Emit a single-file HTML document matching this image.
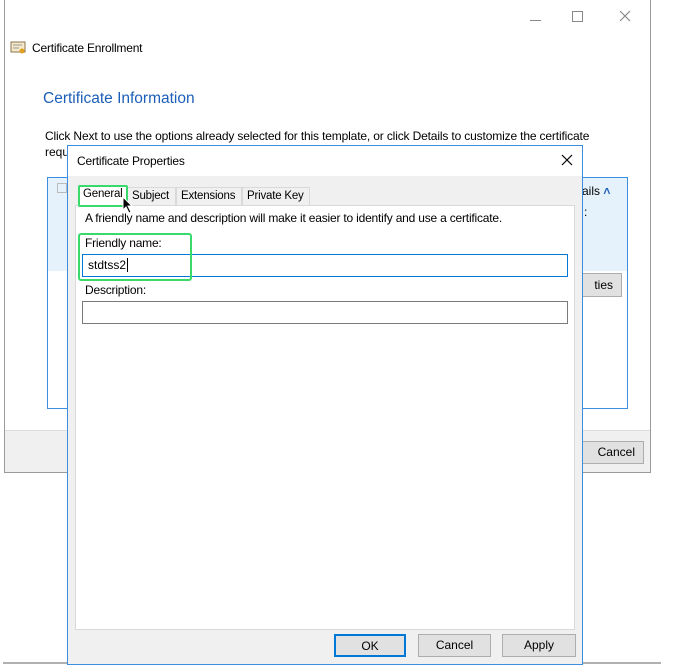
<!DOCTYPE html>
<html><head><style>
*{margin:0;padding:0;box-sizing:border-box}
body{width:673px;height:664px;background:#fff;font-family:"Liberation Sans",sans-serif;font-size:12px;color:#000;position:relative;overflow:hidden}
.a{position:absolute;white-space:nowrap}
.btn{position:absolute;background:#e1e1e1;border:1px solid #adadad;text-align:center;line-height:20px;font-size:12px}
.tab{font-size:11.5px;letter-spacing:-0.2px}
</style></head><body>
<div class="a" style="left:4px;top:0;width:647px;height:473px;border:1px solid #9a9a9a;border-top:none;background:#fff"></div>
<div class="a" style="left:5px;top:430px;width:645px;height:42px;background:#f0f0f0;border-top:1px solid #dcdcdc"></div>
<div class="a" style="left:3px;top:662px;width:658px;height:2px;background:#b0b0b0"></div>
<div class="a" style="left:530px;top:20px;width:11px;height:1px;background:#888"></div>
<div class="a" style="left:572px;top:11px;width:11px;height:11px;border:1px solid #888"></div>
<svg class="a" style="left:619px;top:10px" width="12" height="12"><path d="M1 1L11 11M11 1L1 11" stroke="#888" stroke-width="1.2"/></svg>
<svg class="a" style="left:10px;top:41px" width="16" height="14"><rect x="1" y="1" width="14" height="10" fill="#f6e9c9" stroke="#8a7450"/><line x1="3" y1="4" x2="12" y2="4" stroke="#999"/><line x1="3" y1="7" x2="9" y2="7" stroke="#999"/><circle cx="12" cy="10" r="2.5" fill="#e0a020"/></svg>
<div class="a" style="left:32px;top:41px;font-size:12px;letter-spacing:-0.2px">Certificate Enrollment</div>
<div class="a" style="left:43px;top:90px;font-size:15.5px;color:#1c5fb8">Certificate Information</div>
<div class="a" style="left:45px;top:129px;font-size:12px;letter-spacing:-0.15px">Click Next to use the options already selected for this template, or click Details to customize the certificate</div>
<div class="a" style="left:45px;top:145px;font-size:12px">requ</div>
<div class="a" style="left:47px;top:177px;width:581px;height:232px;border:1px solid #3b8de0;background:#fff"></div>
<div class="a" style="left:48px;top:178px;width:579px;height:93px;background:#e5f1fb"></div>
<div class="a" style="left:57px;top:183px;width:10px;height:10px;border:1px solid #bbb"></div>
<div class="a" style="left:582px;top:184px;font-size:12px">ails <span style="color:#1c5fb8;font-weight:bold">˄</span></div>
<div class="a" style="left:584px;top:205px;font-size:12px">:</div>
<div class="btn" style="left:570px;top:273px;width:52px;height:24px;line-height:22px;text-align:right;padding-right:8px">ties</div>
<div class="btn" style="left:570px;top:441px;width:74px;height:23px;line-height:21px;text-align:right;padding-right:8px">Cancel</div>
<div class="a" style="left:67px;top:145px;width:516px;height:520px;border:1px solid #3b8de0;background:#f0f0f0"></div>
<div class="a" style="left:68px;top:146px;width:514px;height:30px;background:#fff"></div>
<div class="a" style="left:77px;top:154px;font-size:12px;letter-spacing:-0.2px">Certificate Properties</div>
<svg class="a" style="left:561px;top:154px" width="12" height="12"><path d="M1 1L11 11M11 1L1 11" stroke="#000" stroke-width="1.2"/></svg>
<div class="a" style="left:75px;top:205px;width:500px;height:425px;background:#fff;border:1px solid #d9d9d9"></div>
<div class="a tab" style="left:127px;top:187px;width:49px;height:19px;border:1px solid #d9d9d9;border-bottom:none;padding:2px 0 0 4px">Subject</div>
<div class="a tab" style="left:176px;top:187px;width:66px;height:19px;border:1px solid #d9d9d9;border-bottom:none;padding:2px 0 0 4px">Extensions</div>
<div class="a tab" style="left:242px;top:187px;width:68px;height:19px;border:1px solid #d9d9d9;border-bottom:none;padding:2px 0 0 4px">Private Key</div>
<div class="a tab" style="left:78px;top:185px;width:50px;height:22px;background:#fff;border:2px solid #39d96a;border-radius:2px;padding:1px 0 0 3px">General</div>
<svg class="a" style="left:122px;top:196px" width="12" height="18"><path d="M1 1 L1 14 L4 11 L7 17 L9 16 L6 10 L10 10 Z" fill="#000" stroke="#fff" stroke-width="1"/></svg>
<div class="a" style="left:85px;top:211px;letter-spacing:-0.2px">A friendly name and description will make it easier to identify and use a certificate.</div>
<div class="a" style="left:85px;top:236px;letter-spacing:-0.2px">Friendly name:</div>
<div class="a" style="left:82px;top:254px;width:486px;height:23px;border:1px solid #0078d7;background:#fff;padding:3px 0 0 5px">stdtss2<span style="border-left:1px solid #000;margin-left:1px"></span></div>
<div class="a" style="left:78px;top:233px;width:114px;height:48px;border:2px solid #39d96a;border-radius:3px"></div>
<div class="a" style="left:85px;top:283px;letter-spacing:-0.2px">Description:</div>
<div class="a" style="left:82px;top:301px;width:486px;height:23px;border:1px solid #7a7a7a;background:#fff"></div>
<div class="btn" style="left:334px;top:634px;width:72px;height:23px;border:2px solid #0078d7">OK</div>
<div class="btn" style="left:418px;top:634px;width:73px;height:23px">Cancel</div>
<div class="btn" style="left:502px;top:634px;width:74px;height:23px">Apply</div>
</body></html>
